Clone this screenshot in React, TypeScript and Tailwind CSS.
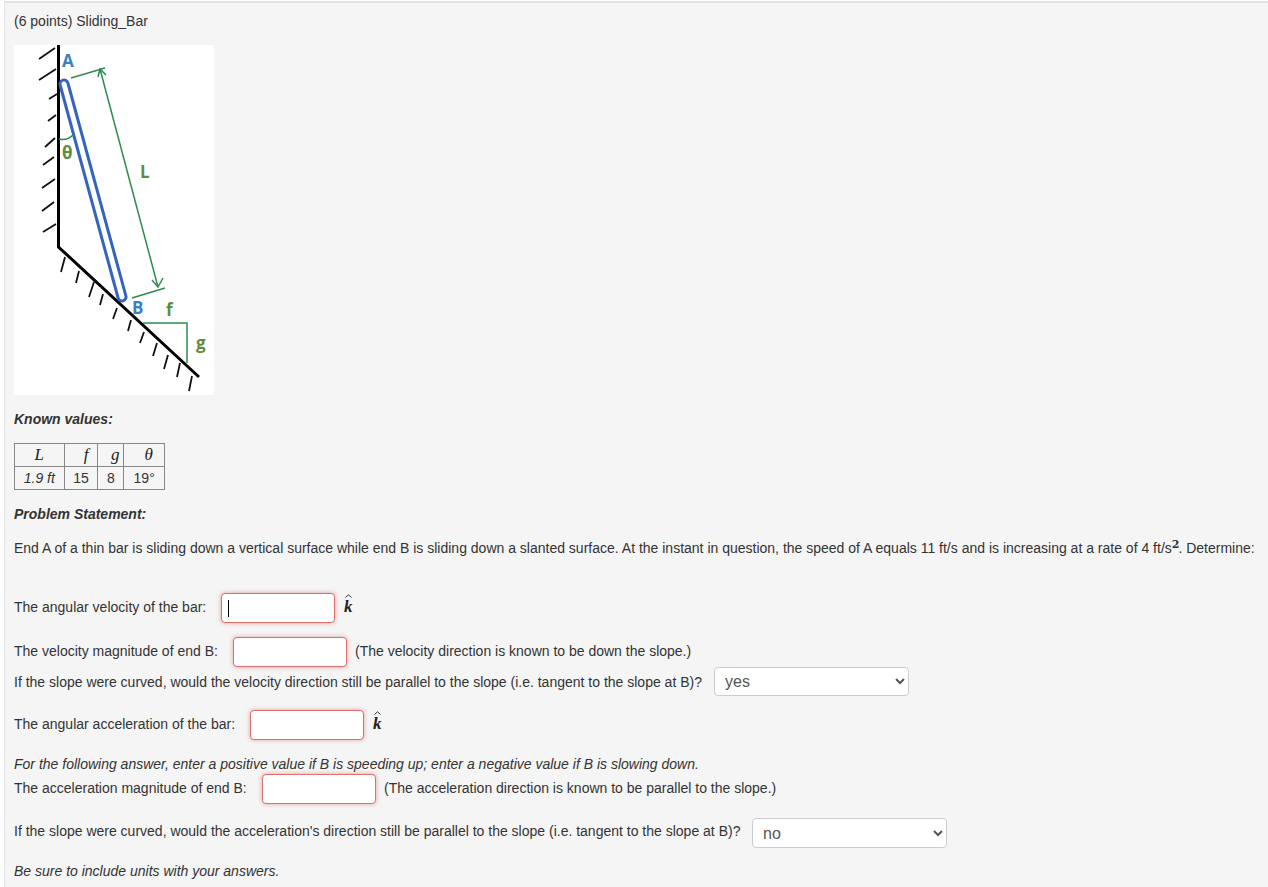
const Hat = () => (
  <span className="relative inline-block font-['Liberation_Serif',serif] italic font-bold text-[17px] leading-[20px] text-[#222]">
    k
    <svg width="7" height="4" viewBox="0 0 7 4" className="absolute left-[1px] top-[-3px]">
      <path d="M0.5 3.5L3.5 0.8L6.5 3.5" fill="none" stroke="#333" strokeWidth="1" />
    </svg>
  </span>
);

const Answer = ({ width = 'w-[114px]' }: { width?: string }) => (
  <input
    type="text"
    className={`${width} h-[30px] bg-white border border-[#d9716f] rounded-[4px] shadow-[0_0_4px_rgba(217,83,79,0.55)] outline-none`}
  />
);

const Choice = ({ value, className }: { value: string; className: string }) => (
  <select
    defaultValue={value}
    className={`${className} bg-white border border-[#ccc] rounded-[4px] pl-[6px] text-[16px] text-[#555] outline-none`}
  >
    <option value="yes">yes</option>
    <option value="no">no</option>
  </select>
);

const Diagram = () => (
  <svg width="200" height="350" viewBox="0 0 200 350" className="block bg-white">
    {/* wall + slope */}
    <path d="M44.5 0V202L185 332" fill="none" stroke="#000" strokeWidth="3" />
    <g stroke="#111" strokeWidth="1.8" fill="none">
      <path d="M41 3L25 14M42 24L25 35M43 49L35 54M42 70L34 76M41 93L31 102M40 112L29 120M41 134L28 143M40 157L28 166M42 179L29 187" />
      <path d="M51 212L47 227M65 226L62 238M80 237L75 252M89 249L86 260M103 263L99 274M117 275L114 286M130 287L126 298M143 298L139 311M154 310L150 324M166 318L163 332M178 331L175 346" />
    </g>
    {/* bar */}
    <path
      d="M46.1 40L104.1 253A4 4 0 0 0 111.9 251L53.9 38A4 4 0 0 0 46.1 40Z"
      fill="#fff"
      stroke="#3563c0"
      strokeWidth="3"
    />
    {/* dimensions */}
    <g stroke="#2e8b4f" strokeWidth="1.5" fill="none">
      <path d="M57 33L91 23M118 253L151 243" />
      <path d="M86 24L144 242" />
      <path d="M84 32L86 24L92 30M138 235L144 242L149 233" />
      <path d="M129 278H173V318" />
      <path d="M45 94Q53 96 59 90" />
    </g>
    <g fontFamily="'Open Sans', sans-serif" fontWeight="700" fontSize="17">
      <text x="48" y="22" fill="#3a80bf">A</text>
      <text x="48" y="114" fill="#5e8c3e">θ</text>
      <text x="126" y="133" fill="#5e8c3e">L</text>
      <text x="118" y="269" fill="#3a80bf">B</text>
      <text x="152" y="271" fill="#5e8c3e">f</text>
      <text x="182" y="304" fill="#5e8c3e">g</text>
    </g>
  </svg>
);

const columns = [
  { head: 'L', value: '1.9 ft', w: 'w-[50px]', italic: true, pad: '' },
  { head: 'f', value: '15', w: 'w-[34px]', italic: false, pad: 'pl-[10px]' },
  { head: 'g', value: '8', w: 'w-[26px]', italic: false, pad: 'pl-[9px]' },
  { head: 'θ', value: '19°', w: 'w-[41px]', italic: false, pad: 'pl-[9px]' },
];

const KnownValues = () => (
  <div className="flex w-[151px] h-[47px] border-t border-l border-[#888]">
    {columns.map((c) => (
      <div key={c.head} className={`${c.w} flex flex-col border-r border-[#888]`}>
        <div
          className={`h-[23px] flex items-center justify-center border-b border-[#888] font-['Liberation_Serif',serif] italic text-[17px] text-[#222] ${c.pad}`}
        >
          {c.head}
        </div>
        <div className={`h-[23px] flex items-center justify-center border-b border-[#888] ${c.italic ? 'italic' : ''}`}>
          {c.value}
        </div>
      </div>
    ))}
  </div>
);

export default function App() {
  return (
    <div className="min-h-[887px] bg-white font-['Liberation_Sans',Arial,sans-serif] text-[14px] leading-[20px] text-[#333]">
      <div className="ml-[4px] pt-[1px] h-[887px] overflow-hidden">
        <div className="h-full bg-[#f5f5f5] border-t-2 border-l border-[#e3e3e3] pl-[9px] pt-[8px]">
          <div className="h-[20px]">(6 points) Sliding_Bar</div>

          <div className="mt-[14px]">
            <Diagram />
          </div>

          <div className="mt-[14px] font-bold italic">Known values:</div>

          <div className="mt-[14px]">
            <KnownValues />
          </div>

          <div className="mt-[14px] font-bold italic">Problem Statement:</div>

          <div className="mt-[14px] whitespace-nowrap">
            End A of a thin bar is sliding down a vertical surface while end B is sliding down a slanted surface. At the
            instant in question, the speed of A equals 11 ft/s and is increasing at a rate of 4 ft/s
            <sup className="font-['DejaVu_Serif',serif] font-bold text-[11px] mr-[-1px]">2</sup>. Determine:
          </div>

          <div className="mt-[35px] flex items-center h-[30px]">
            <span className="w-[207px] pb-[2px]">The angular velocity of the bar:</span>
            <div className="relative">
              <Answer />
              <span className="absolute left-[7px] top-[7px] w-px h-[17px] bg-black" />
            </div>
            <span className="ml-[9px] pb-[2px]">
              <Hat />
            </span>
          </div>

          <div className="mt-[14px] flex items-center h-[30px]">
            <span className="w-[219px] pb-[2px]">The velocity magnitude of end B:</span>
            <Answer />
            <span className="ml-[8px] pb-[2px]">(The velocity direction is known to be down the slope.)</span>
          </div>

          <div className="flex items-center h-[29px]">
            <span className="w-[700px]">
              If the slope were curved, would the velocity direction still be parallel to the slope (i.e. tangent to the
              slope at B)?
            </span>
            <Choice value="yes" className="w-[195px] h-[29px]" />
          </div>

          <div className="mt-[14px] flex items-center h-[30px]">
            <span className="w-[236px] pb-[2px]">The angular acceleration of the bar:</span>
            <Answer />
            <span className="ml-[9px] pb-[2px]">
              <Hat />
            </span>
          </div>

          <div className="mt-[14px] italic">
            For the following answer, enter a positive value if B is speeding up; enter a negative value if B is slowing
            down.
          </div>

          <div className="flex items-center h-[30px]">
            <span className="w-[248px] pb-[2px]">The acceleration magnitude of end B:</span>
            <Answer />
            <span className="ml-[8px] pb-[2px]">(The acceleration direction is known to be parallel to the slope.)</span>
          </div>

          <div className="mt-[14px] flex items-center h-[30px]">
            <span className="w-[738px] pb-[4px]">
              If the slope were curved, would the acceleration's direction still be parallel to the slope (i.e. tangent
              to the slope at B)?
            </span>
            <Choice value="no" className="w-[195px] h-[30px]" />
          </div>

          <div className="mt-[13px] italic">Be sure to include units with your answers.</div>
        </div>
      </div>
    </div>
  );
}
